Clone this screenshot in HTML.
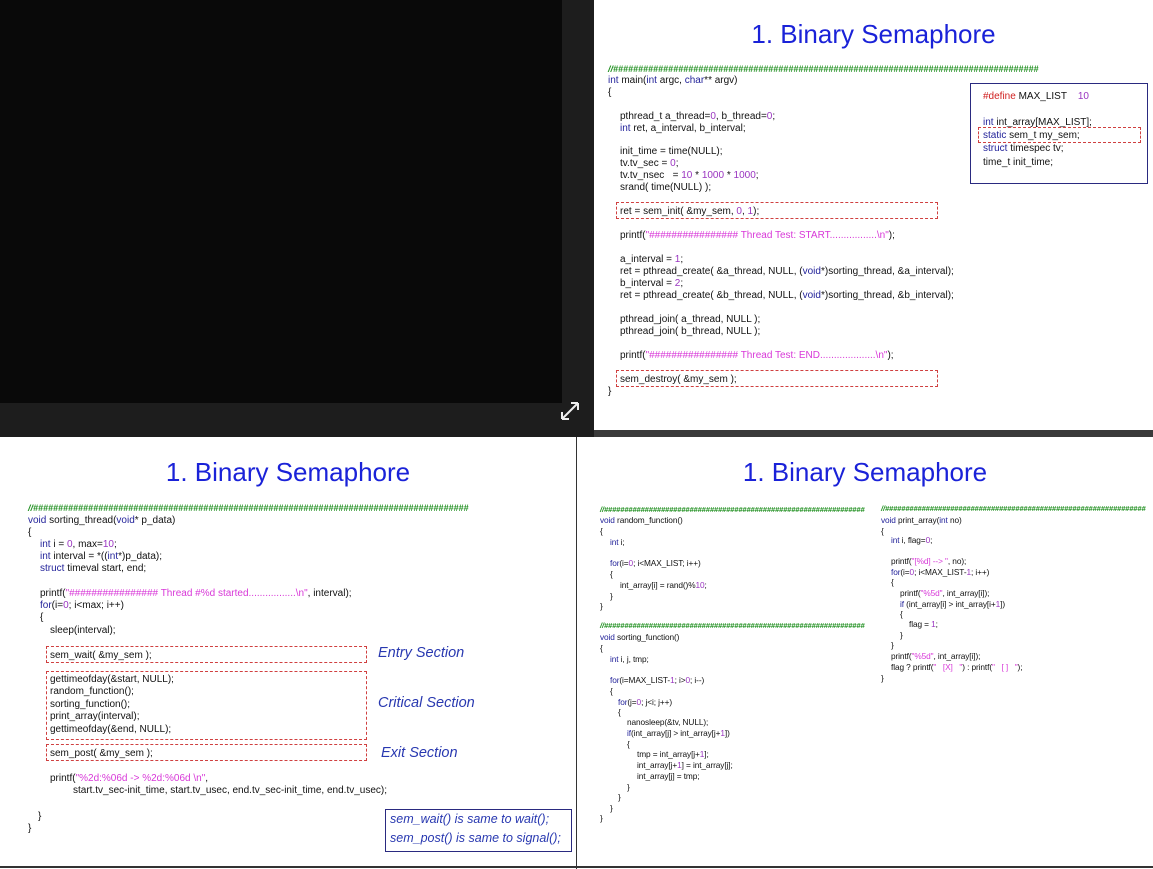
<!DOCTYPE html>
<html><head><meta charset="utf-8"><style>
body{margin:0;width:1153px;height:869px;background:#fff;position:relative;overflow:hidden;font-family:"Liberation Sans",Arial,sans-serif;color:#111}
.a{position:absolute}
.l{position:absolute;white-space:pre;line-height:12px}
.tr .l,.bl .l{font-size:10px;margin-top:2px}
.br .l{font-size:8.3px;line-height:11px;letter-spacing:-0.1px}
.k{color:#23239a}.n{color:#9a35c0}.s{color:#d838d8}.c{color:#1f8f1f;font-style:italic;font-weight:bold}.r{color:#d02020}
.t{position:absolute;color:#1a22d8;font-size:26px;line-height:30px;text-align:center}
.db{position:absolute;border:1px dashed #d04040}
.lab{position:absolute;color:#2838b0;font-style:italic;font-size:14.5px;white-space:pre}
</style></head><body>
<div class="a" style="left:0;top:0;width:594px;height:435px;background:#1d1d1d"></div>
<div class="a" style="left:0;top:0;width:562px;height:403px;background:#090909"></div>
<svg class="a" style="left:559px;top:400px" width="22" height="22" viewBox="0 0 22 22"><path d="M3 19L19 3M3 19v-7M3 19h7M19 3h-7M19 3v7" stroke="#eee" stroke-width="2" fill="none"/></svg>
<div class="a" style="left:594px;top:430px;width:559px;height:7px;background:#3a3a3a"></div>
<div class="a" style="left:0;top:435px;width:594px;height:2px;background:#1d1d1d"></div>
<div class="a" style="left:576px;top:437px;width:1px;height:432px;background:#333"></div>
<div class="a" style="left:0;top:866px;width:1153px;height:2px;background:#333"></div>

<div class="tr">
<div class="t" style="left:594px;width:559px;top:19px">1. Binary Semaphore</div>
<div class="l c" style="left:608px;top:61px;font-size:9px">//#####################################################################################</div>
<div class="l" style="left:608px;top:73px"><span class="k">int</span> main(<span class="k">int</span> argc, <span class="k">char</span>** argv)</div>
<div class="l" style="left:608px;top:85px">{</div>
<div class="l" style="left:620px;top:109px">pthread_t a_thread=<span class="n">0</span>, b_thread=<span class="n">0</span>;</div>
<div class="l" style="left:620px;top:121px"><span class="k">int</span> ret, a_interval, b_interval;</div>
<div class="l" style="left:620px;top:144px">init_time = time(NULL);</div>
<div class="l" style="left:620px;top:156px">tv.tv_sec = <span class="n">0</span>;</div>
<div class="l" style="left:620px;top:168px">tv.tv_nsec   = <span class="n">10</span> * <span class="n">1000</span> * <span class="n">1000</span>;</div>
<div class="l" style="left:620px;top:180px">srand( time(NULL) );</div>
<div class="db" style="left:616px;top:202px;width:320px;height:15px"></div>
<div class="l" style="left:620px;top:204px">ret = sem_init( &amp;my_sem, <span class="n">0</span>, <span class="n">1</span>);</div>
<div class="l" style="left:620px;top:228px">printf(<span class="s">"################ Thread Test: START.................\n"</span>);</div>
<div class="l" style="left:620px;top:252px">a_interval = <span class="n">1</span>;</div>
<div class="l" style="left:620px;top:264px">ret = pthread_create( &amp;a_thread, NULL, (<span class="k">void</span>*)sorting_thread, &amp;a_interval);</div>
<div class="l" style="left:620px;top:276px">b_interval = <span class="n">2</span>;</div>
<div class="l" style="left:620px;top:288px">ret = pthread_create( &amp;b_thread, NULL, (<span class="k">void</span>*)sorting_thread, &amp;b_interval);</div>
<div class="l" style="left:620px;top:312px">pthread_join( a_thread, NULL );</div>
<div class="l" style="left:620px;top:324px">pthread_join( b_thread, NULL );</div>
<div class="l" style="left:620px;top:348px">printf(<span class="s">"################ Thread Test: END....................\n"</span>);</div>
<div class="db" style="left:616px;top:370px;width:320px;height:15px"></div>
<div class="l" style="left:620px;top:372px">sem_destroy( &amp;my_sem );</div>
<div class="l" style="left:608px;top:384px">}</div>
<div class="a" style="left:970px;top:83px;width:176px;height:99px;border:1px solid #2a2a80"></div>
<div class="l" style="left:983px;top:89px"><span class="r">#define</span> MAX_LIST    <span class="n">10</span></div>
<div class="l" style="left:983px;top:115px"><span class="k">int</span> int_array[MAX_LIST];</div>
<div class="db" style="left:978px;top:127px;width:161px;height:14px"></div>
<div class="l" style="left:983px;top:128px"><span class="k">static</span> sem_t my_sem;</div>
<div class="l" style="left:983px;top:141px"><span class="k">struct</span> timespec tv;</div>
<div class="l" style="left:983px;top:155px">time_t init_time;</div>
</div>

<div class="bl">
<div class="t" style="left:0;width:576px;top:457px">1. Binary Semaphore</div>
<div class="l c" style="left:28px;top:500px;font-size:9px">//#######################################################################################</div>
<div class="l" style="left:28px;top:513px"><span class="k">void</span> sorting_thread(<span class="k">void</span>* p_data)</div>
<div class="l" style="left:28px;top:525px">{</div>
<div class="l" style="left:40px;top:537px"><span class="k">int</span> i = <span class="n">0</span>, max=<span class="n">10</span>;</div>
<div class="l" style="left:40px;top:549px"><span class="k">int</span> interval = *((<span class="k">int</span>*)p_data);</div>
<div class="l" style="left:40px;top:561px"><span class="k">struct</span> timeval start, end;</div>
<div class="l" style="left:40px;top:586px">printf(<span class="s">"################ Thread #%d started.................\n"</span>, interval);</div>
<div class="l" style="left:40px;top:598px"><span class="k">for</span>(i=<span class="n">0</span>; i&lt;max; i++)</div>
<div class="l" style="left:40px;top:610px">{</div>
<div class="l" style="left:50px;top:623px">sleep(interval);</div>
<div class="db" style="left:46px;top:646px;width:319px;height:15px"></div>
<div class="l" style="left:50px;top:648px">sem_wait( &amp;my_sem );</div>
<div class="db" style="left:46px;top:671px;width:319px;height:67px"></div>
<div class="l" style="left:50px;top:672px">gettimeofday(&amp;start, NULL);</div>
<div class="l" style="left:50px;top:684px">random_function();</div>
<div class="l" style="left:50px;top:697px">sorting_function();</div>
<div class="l" style="left:50px;top:709px">print_array(interval);</div>
<div class="l" style="left:50px;top:722px">gettimeofday(&amp;end, NULL);</div>
<div class="db" style="left:46px;top:744px;width:319px;height:15px"></div>
<div class="l" style="left:50px;top:746px">sem_post( &amp;my_sem );</div>
<div class="l" style="left:50px;top:771px">printf(<span class="s">"%2d:%06d -&gt; %2d:%06d \n"</span>,</div>
<div class="l" style="left:73px;top:783px">start.tv_sec-init_time, start.tv_usec, end.tv_sec-init_time, end.tv_usec);</div>
<div class="l" style="left:38px;top:809px">}</div>
<div class="l" style="left:28px;top:821px">}</div>
<div class="lab" style="left:378px;top:645px">Entry Section</div>
<div class="lab" style="left:378px;top:695px">Critical Section</div>
<div class="lab" style="left:381px;top:745px">Exit Section</div>
<div class="a" style="left:385px;top:809px;width:185px;height:41px;border:1px solid #2a2a80"></div>
<div class="lab" style="left:390px;top:812px;font-size:12.5px">sem_wait() is same to wait();</div>
<div class="lab" style="left:390px;top:831px;font-size:12.5px">sem_post() is same to signal();</div>
</div>

<div class="br">
<div class="t" style="left:577px;width:576px;top:457px">1. Binary Semaphore</div>
<div class="l c" style="left:600px;top:504px;font-size:7.5px">//################################################################</div>
<div class="l" style="left:600px;top:515px"><span class="k">void</span> random_function()</div>
<div class="l" style="left:600px;top:526px">{</div>
<div class="l" style="left:610px;top:537px"><span class="k">int</span> i;</div>
<div class="l" style="left:610px;top:558px"><span class="k">for</span>(i=<span class="n">0</span>; i&lt;MAX_LIST; i++)</div>
<div class="l" style="left:610px;top:569px">{</div>
<div class="l" style="left:620px;top:580px">int_array[i] = rand()%<span class="n">10</span>;</div>
<div class="l" style="left:610px;top:591px">}</div>
<div class="l" style="left:600px;top:601px">}</div>
<div class="l c" style="left:600px;top:620px;font-size:7.5px">//################################################################</div>
<div class="l" style="left:600px;top:632px"><span class="k">void</span> sorting_function()</div>
<div class="l" style="left:600px;top:643px">{</div>
<div class="l" style="left:610px;top:654px"><span class="k">int</span> i, j, tmp;</div>
<div class="l" style="left:610px;top:675px"><span class="k">for</span>(i=MAX_LIST-<span class="n">1</span>; i&gt;<span class="n">0</span>; i--)</div>
<div class="l" style="left:610px;top:686px">{</div>
<div class="l" style="left:618px;top:697px"><span class="k">for</span>(j=<span class="n">0</span>; j&lt;i; j++)</div>
<div class="l" style="left:618px;top:707px">{</div>
<div class="l" style="left:627px;top:717px">nanosleep(&amp;tv, NULL);</div>
<div class="l" style="left:627px;top:728px"><span class="k">if</span>(int_array[j] &gt; int_array[j+<span class="n">1</span>])</div>
<div class="l" style="left:627px;top:739px">{</div>
<div class="l" style="left:637px;top:749px">tmp = int_array[j+<span class="n">1</span>];</div>
<div class="l" style="left:637px;top:760px">int_array[j+<span class="n">1</span>] = int_array[j];</div>
<div class="l" style="left:637px;top:771px">int_array[j] = tmp;</div>
<div class="l" style="left:627px;top:782px">}</div>
<div class="l" style="left:618px;top:792px">}</div>
<div class="l" style="left:610px;top:803px">}</div>
<div class="l" style="left:600px;top:813px">}</div>

<div class="l c" style="left:881px;top:503px;font-size:7.5px">//################################################################</div>
<div class="l" style="left:881px;top:515px"><span class="k">void</span> print_array(<span class="k">int</span> no)</div>
<div class="l" style="left:881px;top:526px">{</div>
<div class="l" style="left:891px;top:535px"><span class="k">int</span> i, flag=<span class="n">0</span>;</div>
<div class="l" style="left:891px;top:556px">printf(<span class="s">"[%d] --&gt; "</span>, no);</div>
<div class="l" style="left:891px;top:567px"><span class="k">for</span>(i=<span class="n">0</span>; i&lt;MAX_LIST-<span class="n">1</span>; i++)</div>
<div class="l" style="left:891px;top:577px">{</div>
<div class="l" style="left:900px;top:588px">printf(<span class="s">"%5d"</span>, int_array[i]);</div>
<div class="l" style="left:900px;top:599px"><span class="k">if</span> (int_array[i] &gt; int_array[i+<span class="n">1</span>])</div>
<div class="l" style="left:900px;top:609px">{</div>
<div class="l" style="left:909px;top:619px">flag = <span class="n">1</span>;</div>
<div class="l" style="left:900px;top:630px">}</div>
<div class="l" style="left:891px;top:640px">}</div>
<div class="l" style="left:891px;top:651px">printf(<span class="s">"%5d"</span>, int_array[i]);</div>
<div class="l" style="left:891px;top:662px">flag ? printf(<span class="s">"   [X]   "</span>) : printf(<span class="s">"   [ ]   "</span>);</div>
<div class="l" style="left:881px;top:673px">}</div>
</div>
</body></html>
